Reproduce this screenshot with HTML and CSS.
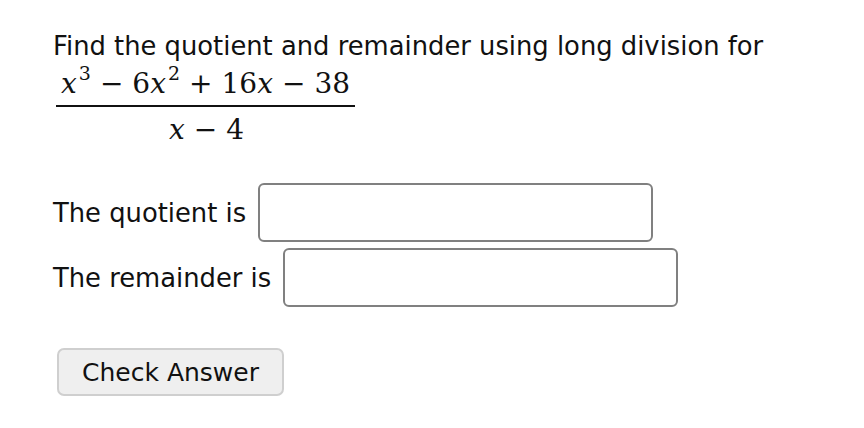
FILE: index.html
```html
<!DOCTYPE html>
<html>
<head>
<meta charset="utf-8">
<link rel="stylesheet" href="styles.css">
</head>
<body>
<div class="page">
  <p class="prompt">Find the quotient and remainder using long division for</p>
  <div class="frac">
    <div class="num"><i>x</i><span class="sup">3</span><span class="op">−</span>6<i>x</i><span class="sup">2</span><span class="op">+</span>16<i>x</i><span class="op">−</span>38</div>
    <div class="den"><i>x</i><span class="op">−</span>4</div>
  </div>
  <div class="row row-q"><span class="label">The quotient is</span><input class="box" type="text"></div>
  <div class="row row-r"><span class="label">The remainder is</span><input class="box" type="text"></div>
  <button class="check">Check Answer</button>
</div>
</body>
</html>
```
FILE: styles.css
```css
html, body { margin: 0; padding: 0; background: #fff; }
.page {
  padding: 30px 0 0 53px;
  font-family: "DejaVu Sans", Verdana, sans-serif;
  font-size: 25.8px;
  color: #111;
  display: flex;
  flex-direction: column;
  align-items: flex-start;
}
.prompt { margin: 0; line-height: 32px; }
.frac {
  display: inline-flex;
  flex-direction: column;
  align-items: center;
  margin-left: 3px;
  margin-top: 6px;
  font-family: "DejaVu Serif", "Liberation Serif", serif;
  font-size: 28px;
  line-height: 32px;
}
.frac i { font-style: italic; }
.sup { font-size: 19px; display: inline-block; vertical-align: top; line-height: 18px; margin-left: 2px; margin-top: -4px; }
.num { padding: 0 5px 5px; border-bottom: 2px solid #111; }
.den { padding-top: 7px; padding-left: 2px; }
.op { margin: 0 9px; }
.row { display: flex; align-items: center; line-height: 30px; }
.row-q { margin-top: 37px; }
.row-r { margin-top: 6px; }
.label { margin-right: 12px; }
.box {
  width: 391px;
  height: 55px;
  box-sizing: content-box;
  padding: 0;
  border: 2px solid #808080;
  border-radius: 6px;
  background: #fff;
  margin: 0;
}
.check {
  margin: 41px 0 0 4px;
  width: 227px;
  height: 48px;
  background: #efefef;
  border: 2px solid #cfcfcf;
  border-radius: 7px;
  font-family: "DejaVu Sans", Verdana, sans-serif;
  font-size: 25px;
  color: #111;
  padding: 0;
}
```
